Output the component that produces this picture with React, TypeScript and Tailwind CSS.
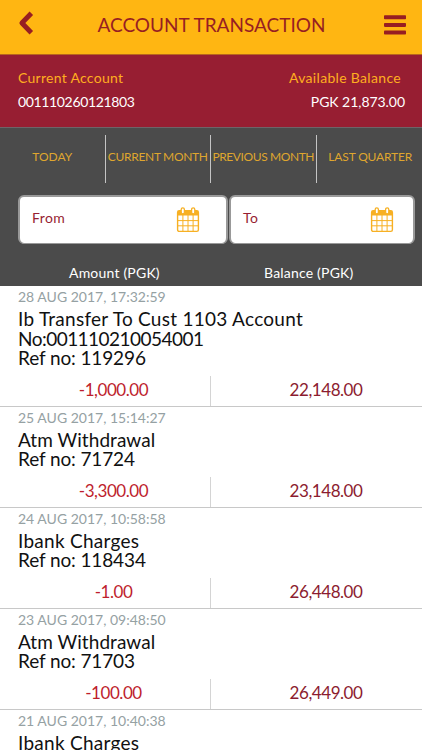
import React from 'react';

interface Line {
  text: string;
  tracking: string;
}

interface Transaction {
  date: string;
  lines: Line[];
  amount: string;
  balance: string;
}

const wide = 'tracking-[0.27px]';
const normal = 'tracking-[0.06px]';
const snug = 'tracking-[-0.12px]';
const tight = 'tracking-[-0.53px]';

const transactions: Transaction[] = [
  {
    date: '28 AUG 2017, 17:32:59',
    lines: [
      { text: 'Ib Transfer To Cust 1103 Account', tracking: wide },
      { text: 'No:001110210054001', tracking: tight },
      { text: 'Ref no: 119296', tracking: snug },
    ],
    amount: '-1,000.00',
    balance: '22,148.00',
  },
  {
    date: '25 AUG 2017, 15:14:27',
    lines: [
      { text: 'Atm Withdrawal', tracking: normal },
      { text: 'Ref no: 71724', tracking: snug },
    ],
    amount: '-3,300.00',
    balance: '23,148.00',
  },
  {
    date: '24 AUG 2017, 10:58:58',
    lines: [
      { text: 'Ibank Charges', tracking: wide },
      { text: 'Ref no: 118434', tracking: snug },
    ],
    amount: '-1.00',
    balance: '26,448.00',
  },
  {
    date: '23 AUG 2017, 09:48:50',
    lines: [
      { text: 'Atm Withdrawal', tracking: normal },
      { text: 'Ref no: 71703', tracking: snug },
    ],
    amount: '-100.00',
    balance: '26,449.00',
  },
];

const CalendarIcon: React.FC = () => (
  <svg className="h-[26px] w-[24px]" viewBox="0 0 24 26" fill="none">
    <rect x="1.6" y="3.8" width="20.8" height="20.6" rx="1.6" stroke="#f7b023" strokeWidth="1.4" />
    <path d="M1.6 8.6V5.2a1.4 1.4 0 0 1 1.4-1.4h18a1.4 1.4 0 0 1 1.4 1.4v3.4z" fill="#f7b023" />
    <path d="M6.9 8v16M12 8v16M17.1 8v16M2 13.6h20M2 18.8h20" stroke="#f7b023" strokeWidth="1" />
    <rect x="5.2" y="0.8" width="3.2" height="6" rx="1.6" fill="#fff" stroke="#f7b023" strokeWidth="1.3" />
    <rect x="15.6" y="0.8" width="3.2" height="6" rx="1.6" fill="#fff" stroke="#f7b023" strokeWidth="1.3" />
  </svg>
);

const DateField: React.FC<{ label: string; className: string }> = ({ label, className }) => (
  <div className={`flex h-[49px] items-center justify-between rounded-md border-2 border-b border-[#999999] bg-white pl-3 text-[14px] text-[#971e32] ${className}`}>
    <span className="-mt-[5px] tracking-[0.4px]">{label}</span>
    <CalendarIcon />
  </div>
);

const App: React.FC = () => {
  return (
    <div className="h-[750px] w-[422px] overflow-hidden bg-white font-['Lato',sans-serif] whitespace-nowrap">
      <header className="flex h-[55px] items-center justify-between border-b border-[#b8661f] bg-[#ffb612] pr-4 pl-[18px] text-[#971e22]">
        <svg className="-mt-[8px] h-6 w-4" viewBox="0 0 16 24" fill="none">
          <path d="M13.3 2.3L3.9 12L13.3 21.7" stroke="#971e22" strokeWidth="4.9" strokeLinejoin="round" />
        </svg>
        <h1 className="-mt-[5px] ml-[5px] text-[19px] leading-6">ACCOUNT TRANSACTION</h1>
        <svg className="-mt-[5px] h-5 w-[22px]" viewBox="0 0 22 20" fill="#971e22">
          <rect y="0.3" width="22" height="4" rx="0.8" />
          <rect y="7.9" width="22" height="4" rx="0.8" />
          <rect y="15.5" width="22" height="4" rx="0.8" />
        </svg>
      </header>

      <section className="flex h-[73px] justify-between border-b border-[#6e6468] bg-[#971e32] pt-[11px] pr-[17px] pl-[18px] text-[14px] leading-6">
        <div>
          <div className="tracking-[0.28px] text-[#ffae1f]">Current Account</div>
          <div className="tracking-[-0.35px] text-white">001110260121803</div>
        </div>
        <div className="text-right">
          <div className="pr-1 tracking-[0.32px] text-[#ffae1f]">Available Balance</div>
          <div className="tracking-[-0.05px] text-white">PGK 21,873.00</div>
        </div>
      </section>

      <section className="h-[158px] bg-[#4b4b4b] pt-[7px]">
        <nav className="grid h-12 grid-cols-4 divide-x divide-[#c4c4c4] text-center text-[12px] leading-[43px] text-[#dfa62e]">
          <div>TODAY</div>
          <div className="tracking-[-0.32px]">CURRENT MONTH</div>
          <div className="tracking-[-0.4px]">PREVIOUS MONTH</div>
          <div className="pl-[2px] tracking-[-0.15px]">LAST QUARTER</div>
        </nav>
        <div className="mt-3 flex gap-px pl-[18px]">
          <DateField label="From" className="w-[210px] pr-[26px]" />
          <DateField label="To" className="w-[186px] pr-[19px]" />
        </div>
        <div className="flex pt-[17px] text-[14px] leading-6 tracking-[0.2px] text-white">
          <div className="ml-[69px] w-[115px]">Amount (PGK)</div>
          <div className="ml-20">Balance (PGK)</div>
        </div>
      </section>

      <ul>
        {transactions.map((t) => (
          <li key={t.date} className="border-b border-[#c8c8c8]">
            <div className="pl-[18px]">
              <div className="pt-px pb-[2px] text-[14px] leading-5 text-[#95a1a3]">{t.date}</div>
              {t.lines.map((line) => (
                <div key={line.text} className={`text-[19px] leading-[19.5px] text-[#111111] ${line.tracking}`}>
                  {line.text}
                </div>
              ))}
            </div>
            <div className="mt-[8px] grid h-[30px] grid-cols-2 divide-x divide-[#d4d4d4] text-center text-[17px] leading-7 tracking-[-0.45px]">
              <div className="pl-[17px] text-[#be1e2d]">{t.amount}</div>
              <div className="pl-[19px] text-[#8c1c30]">{t.balance}</div>
            </div>
          </li>
        ))}
        <li className="pl-[18px]">
          <div className="pt-px pb-[2px] text-[14px] leading-5 text-[#95a1a3]">21 AUG 2017, 10:40:38</div>
          <div className="text-[19px] leading-[19.5px] tracking-[0.27px] text-[#111111]">Ibank Charges</div>
        </li>
      </ul>
    </div>
  );
};

export default App;
